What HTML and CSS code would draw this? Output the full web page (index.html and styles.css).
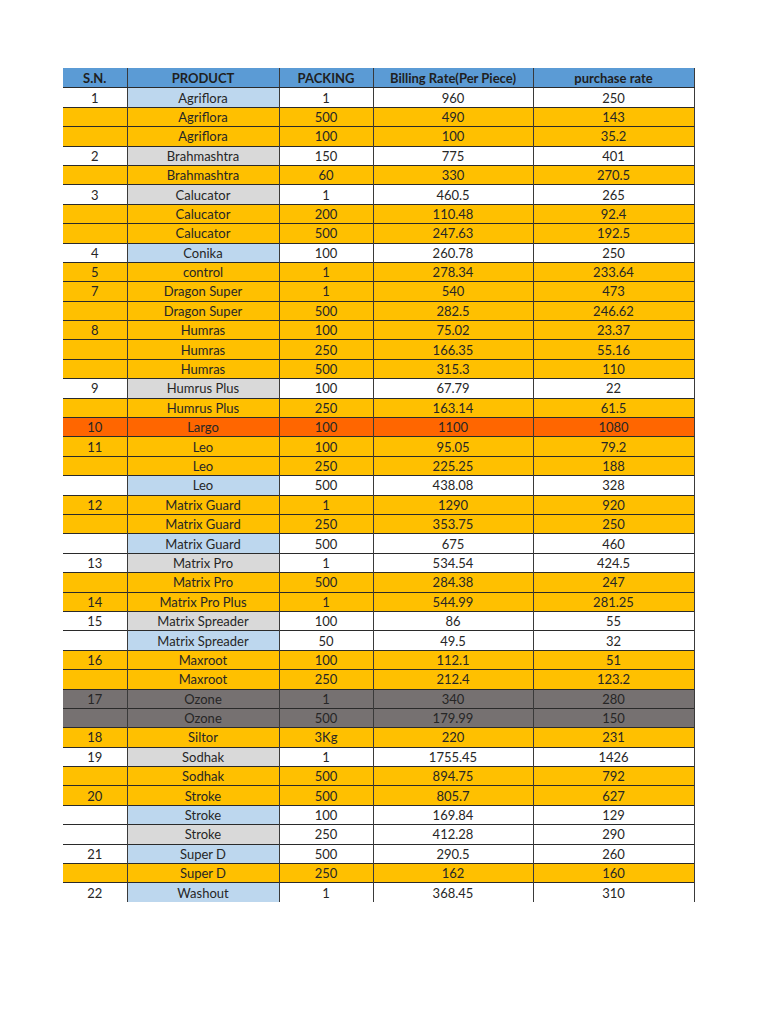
FILE: index.html
```html
<!DOCTYPE html>
<html>
<head>
<meta charset="utf-8">
<link rel="stylesheet" href="styles.css">
</head>
<body>
<div class="sheet">
<table class="rates">
<colgroup><col class="c-sn"><col class="c-prod"><col class="c-pack"><col class="c-bill"><col class="c-pur"></colgroup>
<thead>
<tr><th>S.N.</th><th>PRODUCT</th><th>PACKING</th><th>Billing Rate(Per Piece)</th><th>purchase rate</th></tr>
</thead>
<tbody>
<tr class="w"><td>1</td><td class="lb">Agriflora</td><td>1</td><td>960</td><td>250</td></tr>
<tr class="o"><td></td><td>Agriflora</td><td>500</td><td>490</td><td>143</td></tr>
<tr class="o"><td></td><td>Agriflora</td><td>100</td><td>100</td><td>35.2</td></tr>
<tr class="w"><td>2</td><td class="gr">Brahmashtra</td><td>150</td><td>775</td><td>401</td></tr>
<tr class="o"><td></td><td>Brahmashtra</td><td>60</td><td>330</td><td>270.5</td></tr>
<tr class="w"><td>3</td><td class="gr">Calucator</td><td>1</td><td>460.5</td><td>265</td></tr>
<tr class="o"><td></td><td>Calucator</td><td>200</td><td>110.48</td><td>92.4</td></tr>
<tr class="o"><td></td><td>Calucator</td><td>500</td><td>247.63</td><td>192.5</td></tr>
<tr class="w"><td>4</td><td class="lb">Conika</td><td>100</td><td>260.78</td><td>250</td></tr>
<tr class="o"><td>5</td><td>control</td><td>1</td><td>278.34</td><td>233.64</td></tr>
<tr class="o"><td>7</td><td>Dragon Super</td><td>1</td><td>540</td><td>473</td></tr>
<tr class="o"><td></td><td>Dragon Super</td><td>500</td><td>282.5</td><td>246.62</td></tr>
<tr class="o"><td>8</td><td>Humras</td><td>100</td><td>75.02</td><td>23.37</td></tr>
<tr class="o"><td></td><td>Humras</td><td>250</td><td>166.35</td><td>55.16</td></tr>
<tr class="o"><td></td><td>Humras</td><td>500</td><td>315.3</td><td>110</td></tr>
<tr class="w"><td>9</td><td class="gr">Humrus Plus</td><td>100</td><td>67.79</td><td>22</td></tr>
<tr class="o"><td></td><td>Humrus Plus</td><td>250</td><td>163.14</td><td>61.5</td></tr>
<tr class="r"><td>10</td><td>Largo</td><td>100</td><td>1100</td><td>1080</td></tr>
<tr class="o"><td>11</td><td>Leo</td><td>100</td><td>95.05</td><td>79.2</td></tr>
<tr class="o"><td></td><td>Leo</td><td>250</td><td>225.25</td><td>188</td></tr>
<tr class="w"><td></td><td class="lb">Leo</td><td>500</td><td>438.08</td><td>328</td></tr>
<tr class="o"><td>12</td><td>Matrix Guard</td><td>1</td><td>1290</td><td>920</td></tr>
<tr class="o"><td></td><td>Matrix Guard</td><td>250</td><td>353.75</td><td>250</td></tr>
<tr class="w"><td></td><td class="lb">Matrix Guard</td><td>500</td><td>675</td><td>460</td></tr>
<tr class="w"><td>13</td><td class="gr">Matrix Pro</td><td>1</td><td>534.54</td><td>424.5</td></tr>
<tr class="o"><td></td><td>Matrix Pro</td><td>500</td><td>284.38</td><td>247</td></tr>
<tr class="o"><td>14</td><td>Matrix Pro Plus</td><td>1</td><td>544.99</td><td>281.25</td></tr>
<tr class="w"><td>15</td><td class="gr">Matrix Spreader</td><td>100</td><td>86</td><td>55</td></tr>
<tr class="w"><td></td><td class="lb">Matrix Spreader</td><td>50</td><td>49.5</td><td>32</td></tr>
<tr class="o"><td>16</td><td>Maxroot</td><td>100</td><td>112.1</td><td>51</td></tr>
<tr class="o"><td></td><td>Maxroot</td><td>250</td><td>212.4</td><td>123.2</td></tr>
<tr class="d"><td>17</td><td>Ozone</td><td>1</td><td>340</td><td>280</td></tr>
<tr class="d"><td></td><td>Ozone</td><td>500</td><td>179.99</td><td>150</td></tr>
<tr class="o"><td>18</td><td>Siltor</td><td>3Kg</td><td>220</td><td>231</td></tr>
<tr class="w"><td>19</td><td class="gr">Sodhak</td><td>1</td><td>1755.45</td><td>1426</td></tr>
<tr class="o"><td></td><td>Sodhak</td><td>500</td><td>894.75</td><td>792</td></tr>
<tr class="o"><td>20</td><td>Stroke</td><td>500</td><td>805.7</td><td>627</td></tr>
<tr class="w"><td></td><td class="lb">Stroke</td><td>100</td><td>169.84</td><td>129</td></tr>
<tr class="w"><td></td><td class="gr">Stroke</td><td>250</td><td>412.28</td><td>290</td></tr>
<tr class="w"><td>21</td><td class="lb">Super D</td><td>500</td><td>290.5</td><td>260</td></tr>
<tr class="o"><td></td><td>Super D</td><td>250</td><td>162</td><td>160</td></tr>
<tr class="w last"><td>22</td><td class="lb">Washout</td><td>1</td><td>368.45</td><td>310</td></tr>
</tbody>
</table>
</div>
</body>
</html>
```
FILE: styles.css
```css
html, body {
  margin: 0;
  padding: 0;
  background: #ffffff;
}
.sheet {
  padding: 68px 0 0 63px;
}
.rates {
  border-collapse: collapse;
  table-layout: fixed;
  width: 631px;
  font-family: Lato, "Liberation Sans", sans-serif;
  font-size: 13px;
  color: #262626;
}
.c-sn { width: 64px; }
.c-prod { width: 152px; }
.c-pack { width: 94px; }
.c-bill { width: 160px; }
.c-pur { width: 161px; }
.rates th, .rates td {
  height: 18.4px;
  padding: 0;
  text-align: center;
  vertical-align: middle;
  line-height: 18px;
  border-top: 1px solid #2a2a2a;
  border-right: 1px solid #3a3a3a;
  white-space: nowrap;
}
.rates th {
  background: #5b9bd5;
  font-weight: bold;
  color: #1f1f1f;
  border-top: 1px solid #5b9bd5;
  border-bottom: 1px solid #2a2a2a;
}
.rates th:first-child, .rates td:first-child {
  border-left: 0;
}
.rates tr.last td {
  border-bottom: 0;
}
tr.w td { background: #ffffff; }
tr.o td { background: #ffc000; }
tr.r td { background: #ff6600; }
tr.d td { background: #767171; }
tr td.lb { background: #bdd7ee; }
tr td.gr { background: #d9d9d9; }
```
